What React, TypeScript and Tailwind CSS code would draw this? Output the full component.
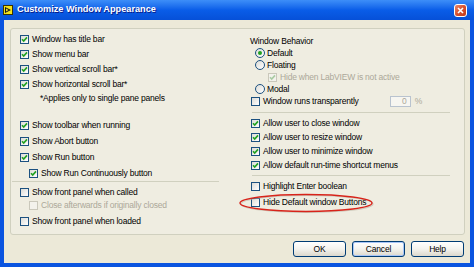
import React from "react";

const ui = "font-['Liberation_Sans',sans-serif] text-[8.5px] tracking-[-0.2px] leading-none text-black";

function Check({ checked = false, disabled = false }: { checked?: boolean; disabled?: boolean }) {
    return (
        <span
            className={`flex h-[9px] w-[9px] shrink-0 items-center justify-center border ${
                disabled ? "border-[#CAC8BB] bg-[#F3F2EC]" : "border-[#1C5180] bg-linear-to-br from-[#DCDCD7] to-white"
            }`}
        >
            {checked && (
                <svg width="7" height="7" viewBox="0 0 7 7">
                    <path d="M1 3.3 L2.7 5.1 L6 1.4" fill="none" stroke={disabled ? "#A9CBA3" : "#21A121"} strokeWidth="1.6" />
                </svg>
            )}
        </span>
    );
}

function CheckRow({
    label,
    checked,
    disabled,
    className = "",
}: {
    label: string;
    checked?: boolean;
    disabled?: boolean;
    className?: string;
}) {
    return (
        <div className={`flex items-center gap-[3px] ${className}`}>
            <Check checked={checked} disabled={disabled} />
            <span className={`whitespace-nowrap ${disabled ? "text-[#ACA899]" : ""}`}>{label}</span>
        </div>
    );
}

function RadioRow({ label, on = false, className = "" }: { label: string; on?: boolean; className?: string }) {
    return (
        <div className={`flex items-center gap-[2px] ${className}`}>
            <span className="flex h-[10px] w-[10px] shrink-0 items-center justify-center rounded-full border border-[#1C5180] bg-linear-to-br from-[#DCDCD7] to-white">
                {on && <span className="h-[4px] w-[4px] rounded-full bg-[#21A121]" />}
            </span>
            <span className="whitespace-nowrap">{label}</span>
        </div>
    );
}

function XpButton({ label, isDefault = false }: { label: string; isDefault?: boolean }) {
    return (
        <button
            className={`flex h-[16px] w-[53px] items-center justify-center rounded-[3px] border border-[#003C74] bg-linear-to-b from-white via-[#F4F3EE] to-[#DCD8CC] ${
                isDefault ? "shadow-[inset_0_0_0_1px_#A9C6F7]" : ""
            }`}
        >
            {label}
        </button>
    );
}

function Divider({ className = "" }: { className?: string }) {
    return <div className={`h-px bg-[#D0D0BF] ${className}`} />;
}

export default function App() {
    return (
        <div className={`relative flex h-[267px] w-[474px] flex-col overflow-hidden ${ui}`}>
            {/* Title bar */}
            <div className="flex h-[20px] shrink-0 items-center bg-linear-to-b from-[#3D8EF8] via-[#0A5DE8] to-[#0650D8] pl-[3px] pr-[7px]">
                <svg width="10" height="10" viewBox="0 0 10 10" className="shrink-0">
                    <rect x="0.5" y="0.5" width="9" height="9" fill="#F2E21C" stroke="#3A3300" />
                    <path d="M2 2 L8 5 L2 8 Z" fill="#1A1A1A" />
                    <path d="M3 3.6 L5.6 5 L3 6.4 Z" fill="#F2E21C" />
                </svg>
                <span className="ml-[4px] text-[9.2px] font-bold tracking-normal text-white [text-shadow:1px_1px_0_#0A1E8A]">
                    Customize Window Appearance
                </span>
                <span className="ml-auto flex h-[13px] w-[13px] items-center justify-center rounded-[3px] border border-white bg-linear-to-br from-[#E9886A] via-[#D8502D] to-[#C13A1C]">
                    <svg width="7" height="7" viewBox="0 0 7 7">
                        <path d="M1 1 L6 6 M6 1 L1 6" stroke="white" strokeWidth="1.6" />
                    </svg>
                </span>
            </div>

            {/* Body */}
            <div className="flex flex-1 flex-col border-x-4 border-b-4 border-[#0A54E0] bg-[#ECE9D8] pl-[6px] pr-[5px] pt-[8px]">
                <div className="flex h-[207px] rounded-[3px] border border-[#D0D0BF] bg-[#EFEDE1]">
                    {/* Left column */}
                    <div className="flex w-[229px] flex-col pt-[3px]">
                        <CheckRow label="Window has title bar" checked className="h-[15px] pl-[9px]" />
                        <CheckRow label="Show menu bar" checked className="h-[15px] pl-[9px]" />
                        <CheckRow label="Show vertical scroll bar*" checked className="h-[15px] pl-[9px]" />
                        <CheckRow label="Show horizontal scroll bar*" checked className="h-[15px] pl-[9px]" />
                        <div className="flex h-[13px] items-center pl-[29px]">*Applies only to single pane panels</div>
                        <CheckRow label="Show toolbar when running" checked className="mt-[12px] h-[16px] pl-[9px]" />
                        <CheckRow label="Show Abort button" checked className="h-[16px] pl-[9px]" />
                        <CheckRow label="Show Run button" checked className="h-[16px] pl-[9px]" />
                        <CheckRow label="Show Run Continuously button" checked className="h-[16px] pl-[18px]" />
                        <Divider className="ml-[1px] w-[207px]" />
                        <CheckRow label="Show front panel when called" className="mt-[3px] h-[14px] pl-[9px]" />
                        <CheckRow label="Close afterwards if originally closed" disabled className="h-[13px] pl-[18px]" />
                        <CheckRow label="Show front panel when loaded" className="mt-[2px] h-[14px] pl-[9px]" />
                    </div>

                    {/* Right column */}
                    <div className="flex flex-1 flex-col pt-[6px]">
                        <div className="flex h-[12px] items-center pl-[10px]">Window Behavior</div>
                        <RadioRow label="Default" on className="h-[12px] pl-[15px]" />
                        <RadioRow label="Floating" className="h-[12px] pl-[15px]" />
                        <CheckRow label="Hide when LabVIEW is not active" checked disabled className="h-[12px] pl-[28px]" />
                        <RadioRow label="Modal" className="h-[12px] pl-[15px]" />
                        <div className="flex h-[13px] items-center pl-[11px] pr-[42px]">
                            <Check />
                            <span className="ml-[3px]">Window runs transparently</span>
                            <span className="ml-auto flex h-[11px] w-[21px] items-center justify-end border border-[#B9C3CF] bg-[#F7F6F1] pr-[3px] text-[#ACA899]">
                                0
                            </span>
                            <span className="ml-[4px] text-[#ACA899]">%</span>
                        </div>
                        <Divider className="ml-[12px] mt-[4px] w-[198px]" />
                        <CheckRow label="Allow user to close window" checked className="mt-[3px] h-[14px] pl-[11px]" />
                        <CheckRow label="Allow user to resize window" checked className="h-[14px] pl-[11px]" />
                        <CheckRow label="Allow user to minimize window" checked className="h-[14px] pl-[11px]" />
                        <CheckRow label="Allow default run-time shortcut menus" checked className="h-[14px] pl-[11px]" />
                        <Divider className="ml-[12px] mt-[3px] w-[198px]" />
                        <CheckRow label="Highlight Enter boolean" className="mt-[3px] h-[14px] pl-[11px]" />
                        <CheckRow label="Hide Default window Buttons" className="mt-[2px] h-[14px] pl-[11px]" />
                    </div>
                </div>

                {/* Buttons */}
                <div className="mt-[6px] flex justify-end gap-[6px] pr-[1px]">
                    <XpButton label="OK" />
                    <XpButton label="Cancel" isDefault />
                    <XpButton label="Help" />
                </div>
            </div>

            {/* Red highlight ellipse */}
            <svg className="pointer-events-none absolute left-[238px] top-[193px]" width="138" height="21" viewBox="0 0 138 21">
                <ellipse cx="69" cy="11" rx="66" ry="8.5" fill="none" stroke="#B8B0A0" strokeWidth="1.2" opacity="0.6" />
                <ellipse cx="68" cy="10" rx="66" ry="8.5" fill="none" stroke="#D8231A" strokeWidth="1.4" />
            </svg>
        </div>
    );
}
